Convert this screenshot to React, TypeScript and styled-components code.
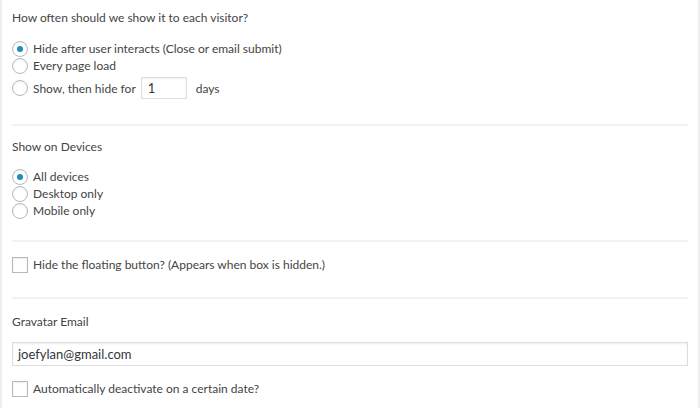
import React from "react";
import styled, { createGlobalStyle } from "styled-components";

const Global = createGlobalStyle`
  html, body { margin: 0; padding: 0; background: #fff; }
  body { font-family: "Lato", "Noto Sans", sans-serif; font-size: 12px; color: #444; }
`;

const Panel = styled.div`
  width: 700px;
  height: 408px;
  box-sizing: border-box;
  border-left: 2px solid #eeeeee;
  border-right: 2px solid #eeeeee;
  padding: 0 10px 0 10px;
  overflow: hidden;
`;

const Section = styled.div<{ $pt: number; $pb: number }>`
  padding-top: ${(p) => p.$pt}px;
  padding-bottom: ${(p) => p.$pb}px;
  border-bottom: ${(p) => (p.$pb ? "2px solid #f1f1f1" : "none")};
`;

const Title = styled.div<{ $mb: number }>`
  line-height: 18px;
  margin-bottom: ${(p) => p.$mb}px;
`;

const OptionList = styled.div`
  display: flex;
  flex-direction: column;
`;

const Option = styled.label<{ $h?: number; $mt?: number }>`
  display: flex;
  align-items: center;
  gap: 5px;
  height: ${(p) => p.$h ?? 17}px;
  margin-top: ${(p) => p.$mt ?? 0}px;
  line-height: 17px;
  white-space: nowrap;
`;

const Radio = styled.span<{ $on?: boolean }>`
  width: 16px;
  height: 16px;
  box-sizing: border-box;
  border: 1px solid #b4b9be;
  border-radius: 50%;
  background: #fff;
  box-shadow: inset 0 1px 2px rgba(0, 0, 0, 0.07);
  display: flex;
  align-items: center;
  justify-content: center;
  flex: none;
  &::after {
    content: "";
    display: ${(p) => (p.$on ? "block" : "none")};
    width: 6px;
    height: 6px;
    border-radius: 50%;
    background: #1e8cbe;
  }
`;

const Check = styled.span`
  width: 16px;
  height: 16px;
  box-sizing: border-box;
  border: 1px solid #b4b9be;
  background: #fff;
  box-shadow: inset 0 1px 2px rgba(0, 0, 0, 0.07);
  flex: none;
`;

const SmallInput = styled.div`
  width: 46px;
  height: 22px;
  box-sizing: border-box;
  border: 1px solid #ddd;
  box-shadow: inset 0 1px 2px rgba(0, 0, 0, 0.07);
  padding: 0 6px;
  line-height: 20px;
  font-size: 13px;
  color: #32373c;
  margin: 0 4px 0 0;
`;

const TextInput = styled.div`
  height: 24px;
  box-sizing: border-box;
  border: 1px solid #ddd;
  box-shadow: inset 0 1px 2px rgba(0, 0, 0, 0.07);
  padding: 0 5px;
  line-height: 22px;
  font-size: 13px;
  color: #32373c;
`;

export default function App() {
  return (
    <>
      <Global />
      <Panel>
        <Section $pt={9} $pb={22}>
          <Title $mb={13}>How often should we show it to each visitor?</Title>
          <OptionList>
            <Option>
              <Radio $on />
              Hide after user interacts (Close or email submit)
            </Option>
            <Option>
              <Radio />
              Every page load
            </Option>
            <Option $h={28}>
              <Radio />
              Show, then hide for <SmallInput>1</SmallInput> days
            </Option>
          </OptionList>
        </Section>
        <Section $pt={12} $pb={21}>
          <Title $mb={12}>Show on Devices</Title>
          <OptionList>
            <Option>
              <Radio $on />
              All devices
            </Option>
            <Option>
              <Radio />
              Desktop only
            </Option>
            <Option>
              <Radio />
              Mobile only
            </Option>
          </OptionList>
        </Section>
        <Section $pt={14} $pb={24}>
          <Option>
            <Check />
            Hide the floating button? (Appears when box is hidden.)
          </Option>
        </Section>
        <Section $pt={14} $pb={0}>
          <Title $mb={11}>Gravatar Email</Title>
          <TextInput>joefylan@gmail.com</TextInput>
          <Option $mt={14}>
            <Check />
            Automatically deactivate on a certain date?
          </Option>
        </Section>
      </Panel>
    </>
  );
}
